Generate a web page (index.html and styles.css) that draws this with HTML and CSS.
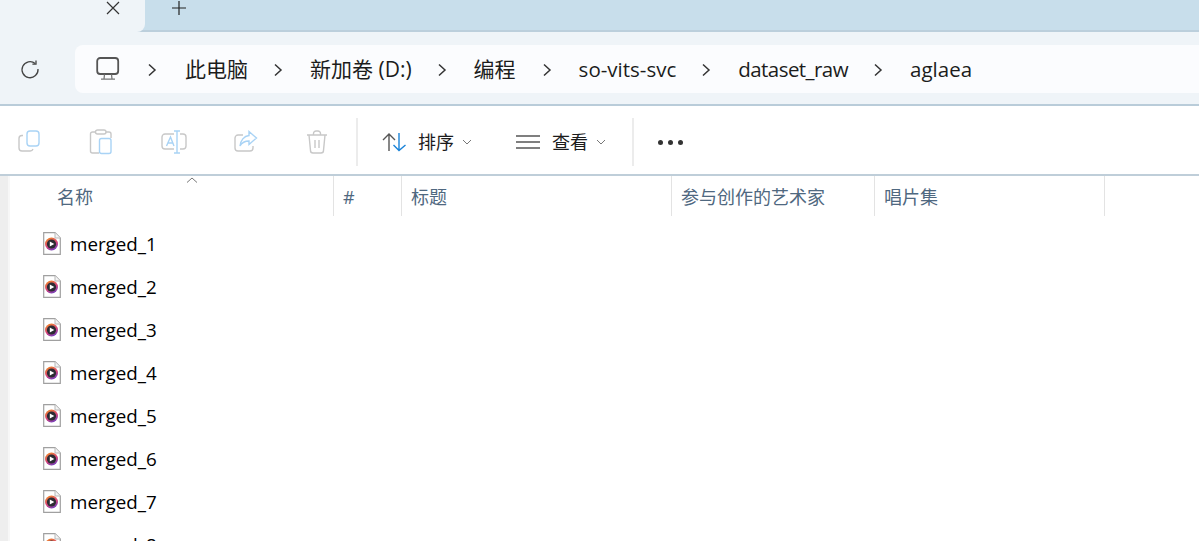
FILE: index.html
```html
<!DOCTYPE html>
<html lang="zh-CN">
<head>
    <meta charset="UTF-8">
    <title>aglaea</title>
    <link rel="stylesheet" href="styles.css">
</head>
<body>
    <!-- タブ -->
    <div class="tabstrip">
        <div class="tab">
            <svg class="tab-close" width="14" height="14" viewBox="0 0 14 14"><path d="M1 1L13 13M13 1L1 13" stroke="#333" stroke-width="1.2" fill="none"/></svg>
        </div>
        <svg class="tab-new" width="16" height="16" viewBox="0 0 16 16"><path d="M8 1V15M1 8H15" stroke="#222" stroke-width="1.2" fill="none"/></svg>
    </div>

    <!-- アドレスバー -->
    <div class="addressrow">
        <svg class="refresh" width="20" height="20" viewBox="0 0 20 20"><path d="M15.2 4.6A8 8 0 1 0 18 10" stroke="#444" stroke-width="1.3" fill="none"/><path d="M16 1.6V5.2H12.4" stroke="#444" stroke-width="1.3" fill="none"/></svg>
        <div class="addressbar">
            <svg class="pc" width="24" height="24" viewBox="0 0 24 24"><rect x="1.2" y="1" width="21" height="16" rx="3" stroke="#555" stroke-width="1.8" fill="none"/><path d="M8.5 17.5L8 22M15.5 17.5L16 22M5 22.2H19" stroke="#777" stroke-width="1.3" fill="none"/></svg>
            <svg class="crumb-sep" width="10" height="14" viewBox="0 0 10 14"><path d="M2 1.5L8 7L2 12.5" stroke="#333" stroke-width="1.5" fill="none"/></svg>
            <span class="crumb crumb-cjk">此电脑</span>
            <svg class="crumb-sep" width="10" height="14" viewBox="0 0 10 14"><path d="M2 1.5L8 7L2 12.5" stroke="#333" stroke-width="1.5" fill="none"/></svg>
            <span class="crumb crumb-cjk">新加卷 (D:)</span>
            <svg class="crumb-sep" width="10" height="14" viewBox="0 0 10 14"><path d="M2 1.5L8 7L2 12.5" stroke="#333" stroke-width="1.5" fill="none"/></svg>
            <span class="crumb crumb-cjk crumb-wide">编程</span>
            <svg class="crumb-sep" width="10" height="14" viewBox="0 0 10 14"><path d="M2 1.5L8 7L2 12.5" stroke="#333" stroke-width="1.5" fill="none"/></svg>
            <span class="crumb">so-vits-svc</span>
            <svg class="crumb-sep" width="10" height="14" viewBox="0 0 10 14"><path d="M2 1.5L8 7L2 12.5" stroke="#333" stroke-width="1.5" fill="none"/></svg>
            <span class="crumb crumb-tight">dataset_raw</span>
            <svg class="crumb-sep" width="10" height="14" viewBox="0 0 10 14"><path d="M2 1.5L8 7L2 12.5" stroke="#333" stroke-width="1.5" fill="none"/></svg>
            <span class="crumb">aglaea</span>
        </div>
    </div>

    <!-- ツールバー -->
    <div class="toolbar">
        <div class="tool-group">
            <svg class="tool" width="24" height="24" viewBox="0 0 24 24"><path d="M5 5.5H4A3 3 0 0 0 1 8.5V18A3 3 0 0 0 4 21H12A3 3 0 0 0 15 19" stroke="#c8c8c8" stroke-width="1.4" fill="none"/><rect x="9" y="1" width="12" height="15" rx="3" fill="#fff" stroke="#a9d3f5" stroke-width="1.4"/></svg>
            <svg class="tool" width="24" height="26" viewBox="0 0 24 26"><path d="M7 3H3.5A2 2 0 0 0 1.5 5V22A2 2 0 0 0 3.500 24H10M17 3H20A2 2 0 0 1 22 5V9" stroke="#c8c8c8" stroke-width="1.4" fill="none"/><rect x="6.500" y="1" width="10.500" height="4" rx="2" fill="#fff" stroke="#c8c8c8" stroke-width="1.4"/><rect x="10.500" y="9.500" width="11.500" height="15" rx="2" fill="#fff" stroke="#a9d3f5" stroke-width="1.4"/></svg>
            <svg class="tool" width="26" height="24" viewBox="0 0 26 24"><path d="M13 4H4A3 3 0 0 0 1 7V16A3 3 0 0 0 4 19H13M19 4H22A3 3 0 0 1 25 7V16A3 3 0 0 1 22 19H19" stroke="#c8c8c8" stroke-width="1.4" fill="none"/><path d="M16 1V23M13 1H19M13 23H19M5.500 16L9.500 7L13 16M7 13H12" stroke="#a9d3f5" stroke-width="1.4" fill="none"/></svg>
            <svg class="tool" width="24" height="24" viewBox="0 0 24 24"><path d="M9 5H4A3 3 0 0 0 1 8V18A3 3 0 0 0 4 21H16A3 3 0 0 0 19 18V16" stroke="#c8c8c8" stroke-width="1.4" fill="none"/><path d="M15 1.500L22.500 8L15 14.500V11C11 11 8 12.500 6 16C6.500 10.500 10 6 15 5.500Z" fill="#fff" stroke="#a9d3f5" stroke-width="1.400"/></svg>
            <svg class="tool" width="22" height="24" viewBox="0 0 22 24"><path d="M1 5H21M7.500 5V3.500A2.500 2.500 0 0 1 10 1H12A2.500 2.500 0 0 1 14.500 3.500V5M3 5L4.500 20.500A2.500 2.500 0 0 0 7 23H15A2.500 2.500 0 0 0 17.500 20.500L19 5M9 10V18M13 10V18" stroke="#c8c8c8" stroke-width="1.4" fill="none"/></svg>
        </div>
        <div class="tool-divider"></div>
        <div class="tool-action action-sort">
            <svg width="26" height="20" viewBox="0 0 26 20"><path d="M7 19V2M1 8L7 2L13 8" stroke="#555" stroke-width="1.4" fill="none"/><path d="M17 1V18.500M11.500 13L17 18.500L23.500 13" stroke="#1a83d8" stroke-width="1.400" fill="none"/></svg>
            <span class="tool-label">排序</span>
            <svg class="chevron" width="10" height="6" viewBox="0 0 10 6"><path d="M1 1L5 5L9 1" stroke="#777" stroke-width="1" fill="none"/></svg>
        </div>
        <div class="tool-action action-view">
            <svg width="24" height="16" viewBox="0 0 24 16"><path d="M0 2H24M0 8H24M0 14H24" stroke="#555" stroke-width="1.3" fill="none"/></svg>
            <span class="tool-label">查看</span>
            <svg class="chevron" width="10" height="6" viewBox="0 0 10 6"><path d="M1 1L5 5L9 1" stroke="#777" stroke-width="1" fill="none"/></svg>
        </div>
        <div class="tool-divider"></div>
        <div class="more"><i></i><i></i><i></i></div>
    </div>

    <!-- 一覧 -->
    <div class="content">
        <div class="side-strip"></div>
        <div class="listing">
            <div class="columns">
                <div class="col col-name">名称
                    <svg class="sort-arrow" width="12" height="6" viewBox="0 0 12 6"><path d="M1 5.500L6 1L11 5.500" stroke="#777" stroke-width="1" fill="none"/></svg>
                </div>
                <div class="col col-num">#</div>
                <div class="col col-title">标题</div>
                <div class="col col-artist">参与创作的艺术家</div>
                <div class="col col-album">唱片集</div>
            </div>
            <div class="files">
                <div class="file"><svg class="file-icon" width="18" height="23" viewBox="0 0 18 23"><use href="#media"/></svg>merged_1</div>
                <div class="file"><svg class="file-icon" width="18" height="23" viewBox="0 0 18 23"><use href="#media"/></svg>merged_2</div>
                <div class="file"><svg class="file-icon" width="18" height="23" viewBox="0 0 18 23"><use href="#media"/></svg>merged_3</div>
                <div class="file"><svg class="file-icon" width="18" height="23" viewBox="0 0 18 23"><use href="#media"/></svg>merged_4</div>
                <div class="file"><svg class="file-icon" width="18" height="23" viewBox="0 0 18 23"><use href="#media"/></svg>merged_5</div>
                <div class="file"><svg class="file-icon" width="18" height="23" viewBox="0 0 18 23"><use href="#media"/></svg>merged_6</div>
                <div class="file"><svg class="file-icon" width="18" height="23" viewBox="0 0 18 23"><use href="#media"/></svg>merged_7</div>
                <div class="file"><svg class="file-icon" width="18" height="23" viewBox="0 0 18 23"><use href="#media"/></svg>merged_8</div>
            </div>
        </div>
    </div>

    <!-- ファイルアイコン -->
    <svg class="defs" width="0" height="0">
        <defs>
            <linearGradient id="ring" x1="0.2" y1="0" x2="0.7" y2="1">
                <stop offset="0" stop-color="#f08a24"/>
                <stop offset="0.55" stop-color="#d8447a"/>
                <stop offset="1" stop-color="#6d3fc0"/>
            </linearGradient>
            <g id="media">
                <path d="M0.700 0.700H12L17.300 6V22.300H0.700Z" fill="#fff" stroke="#a0a0a0" stroke-width="1.2"/>
                <path d="M12 0.700V6H17.300" fill="#f4f4f4" stroke="#b8b8b8"/>
                <circle cx="8.500" cy="12" r="6.500" fill="url(#ring)"/>
                <circle cx="8.500" cy="12" r="4.600" fill="#2b2b33"/>
                <path d="M6.800 9.500L11.300 12L6.800 14.500Z" fill="#fff"/>
            </g>
        </defs>
    </svg>
</body>
</html>
```

FILE: styles.css
```css
/* ページ全体 */
html, body {
    height: 100%;
}

body {
    margin: 0;
    height: 541px;
    overflow: hidden;
    background-color: #fff;
    font-family: "Open Sans", "Noto Sans CJK SC", sans-serif;
    color: #1c1c1c;
}

/* タブ */
.tabstrip {
    height: 30px;
    display: flex;
    align-items: flex-start;
    background-color: #c8deeb;
    border-bottom: 2px solid #bccfdc;
}

.tab {
    width: 145px;
    height: 32px;
    background-color: #eff4f8;
    border-bottom-right-radius: 8px;
    display: flex;
    justify-content: flex-end;
    flex-shrink: 0;
}

.tab-close {
    margin: 1px 25px 0 0;
}

.tab-new {
    margin: 0 0 0 26px;
}

/* アドレスバー */
.addressrow {
    height: 70px;
    padding-top: 2px;
    display: flex;
    align-items: center;
    background-color: #eff4f8;
    border-bottom: 2px solid #b9ccd9;
}

.refresh {
    margin: 0 35px 0 20px;
    flex-shrink: 0;
}

.addressbar {
    flex: 1;
    height: 48px;
    display: flex;
    align-items: center;
    padding-left: 21px;
    background-color: #fbfcfe;
    border-radius: 8px 0 0 8px;
    font-size: 20.5px;
}

.pc {
    margin-right: 27px;
}

.pc + .crumb-sep {
    margin-right: 1px;
}

.crumb-sep {
    margin-top: 2px;
}

.crumb {
    margin: 1px 25px 0 27px;
    white-space: nowrap;
    line-height: 1;
}

.crumb-cjk {
    font-size: 21px;
}

.crumb-wide {
    margin-right: 26px;
}

.crumb-tight {
    letter-spacing: -0.55px;
}

/* ツールバー */
.toolbar {
    height: 64px;
    padding-top: 4px;
    display: flex;
    align-items: center;
    background-color: #fff;
    border-bottom: 2px solid #bfced9;
}

.tool-group {
    width: 356px;
    display: flex;
    align-items: center;
}

.tool:nth-child(1) { margin-left: 18px; }
.tool:nth-child(2) { margin-left: 47px; }
.tool:nth-child(3) { margin-left: 48px; }
.tool:nth-child(4) { margin-left: 47px; }
.tool:nth-child(5) { margin-left: 48px; }

.tool-divider {
    width: 2px;
    height: 48px;
    background-color: #ececec;
    flex-shrink: 0;
}

.tool-action {
    display: flex;
    align-items: center;
}

.action-sort {
    margin-left: 24px;
}

.action-view {
    margin-left: 44px;
    margin-right: 26px;
}

.tool-label {
    font-size: 18px;
    line-height: 1;
    margin: 0 8px 0 10px;
}

.action-view .tool-label {
    margin-left: 12px;
}

.more {
    display: flex;
    gap: 5px;
    margin-left: 24px;
}

.more i {
    width: 5px;
    height: 5px;
    border-radius: 50%;
    background-color: #333;
}

/* 一覧 */
.content {
    display: flex;
    height: 365px;
    overflow: hidden;
}

.side-strip {
    width: 8px;
    background-color: #eeeeee;
    border-right: 2px solid #f7f7f7;
    flex-shrink: 0;
}

.columns {
    height: 40px;
    display: flex;
    font-size: 18px;
    color: #4f6880;
}

.col {
    box-sizing: border-box;
    height: 40px;
    line-height: 42px;
    padding-left: 9px;
    border-right: 1px solid #e3e3e3;
    flex-shrink: 0;
    position: relative;
}

.col-name { width: 324px; padding-left: 47px; }
.col-num { width: 68px; }
.col-title { width: 270px; }
.col-artist { width: 203px; }
.col-album { width: 230px; }

.sort-arrow {
    position: absolute;
    left: 176px;
    top: 1px;
}

.files {
    padding-top: 6px;
}

.file {
    height: 43px;
    display: flex;
    align-items: center;
    padding-left: 33px;
    font-size: 18.8px;
    color: #000;
    white-space: nowrap;
}

.file-icon {
    margin-right: 9px;
    flex-shrink: 0;
}

.defs {
    position: absolute;
}
```
